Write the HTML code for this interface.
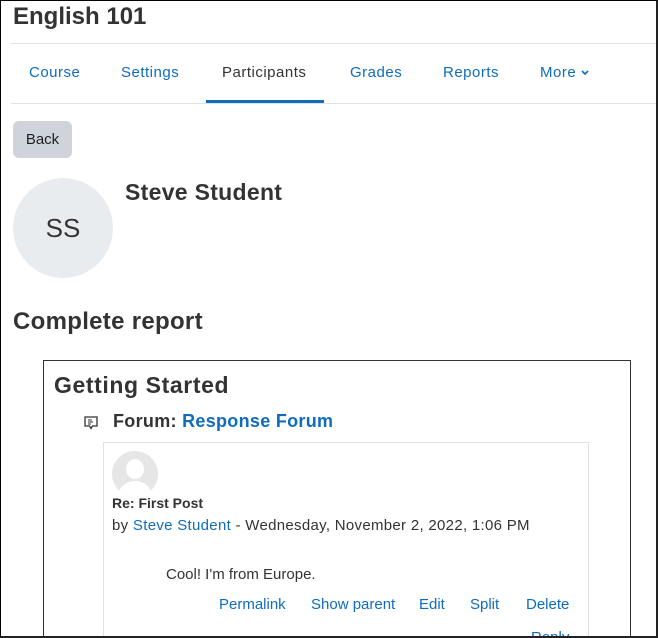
<!DOCTYPE html>
<html style="width:658px;height:638px;overflow:hidden"><head><style>
*{margin:0;padding:0;box-sizing:border-box}
body{width:658px;height:638px;overflow:hidden;font-family:"Liberation Sans",sans-serif;color:#1d2125;background:#fff;position:relative}
.frame{position:absolute;left:0;top:0;width:658px;height:638px;border:1px solid #000;border-right:2px solid #222;border-bottom:2px solid #222;z-index:10;pointer-events:none}
.a{position:absolute;white-space:nowrap}
.blue{color:#0f6cbf}
.n{font-size:15px;letter-spacing:0.5px}
</style></head><body>
<div class="frame"></div>
<div class="a" style="left:13px;top:3px;font-size:24px;font-weight:bold;color:#333">English 101</div>
<div class="a" style="left:11px;top:43px;width:647px;height:1px;background:#dee2e6"></div>
<div class="a blue n" style="left:29px;top:64px">Course</div>
<div class="a blue n" style="left:121px;top:64px">Settings</div>
<div class="a n" style="left:222px;top:64px;color:#333">Participants</div>
<div class="a blue n" style="left:350px;top:64px">Grades</div>
<div class="a blue n" style="left:443px;top:64px">Reports</div>
<div class="a blue n" style="left:540px;top:64px">More</div>
<svg class="a" style="left:581px;top:70px" width="8" height="6" viewBox="0 0 8 6"><path d="M1 1l3 3 3-3" fill="none" stroke="#0f6cbf" stroke-width="1.6"/></svg>
<div class="a" style="left:206px;top:100px;width:118px;height:3px;background:#0f6cbf"></div>
<div class="a" style="left:11px;top:103px;width:647px;height:1px;background:#dee2e6"></div>
<div class="a" style="left:13px;top:121px;width:59px;height:37px;background:#ced4da;border-radius:6px;font-size:15px;line-height:37px;text-align:center;color:#1d2125">Back</div>
<div class="a" style="left:13px;top:178px;width:100px;height:100px;border-radius:50%;background:#e9ecef;font-size:26px;line-height:100px;text-align:center;color:#333">SS</div>
<div class="a" style="left:125px;top:179px;font-size:23px;font-weight:bold;color:#333;letter-spacing:0.3px">Steve Student</div>
<div class="a" style="left:13px;top:308px;font-size:24px;font-weight:bold;color:#333;letter-spacing:0.3px">Complete report</div>
<div class="a" style="left:43px;top:360px;width:588px;height:300px;border:1px solid #333"></div>
<div class="a" style="left:54px;top:372px;font-size:23px;font-weight:bold;color:#333;letter-spacing:0.6px">Getting Started</div>
<svg class="a" style="left:83px;top:415px" width="16" height="16" viewBox="0 0 16 16"><path d="M2 2h12v9H9.5L8 13.5 6.5 11H2z" fill="none" stroke="#333" stroke-width="1.3"/><path d="M5 5h4M5 7h5M5 9h3" stroke="#333" stroke-width="1"/></svg>
<div class="a" style="left:113px;top:411px;font-size:18px;font-weight:bold;color:#333;letter-spacing:0.3px">Forum: <span class="blue">Response Forum</span></div>
<div class="a" style="left:103px;top:442px;width:486px;height:220px;border:1px solid #dee2e6"></div>
<div class="a" style="left:112px;top:451px;width:46px;height:46px;border-radius:50%;background:#e6e6e6;overflow:hidden"><div style="position:absolute;left:14px;top:8px;width:18px;height:20px;border-radius:50%;background:#fff"></div><div style="position:absolute;left:6px;top:30px;width:34px;height:30px;border-radius:50%;background:#fff"></div></div>
<div class="a" style="left:112px;top:495px;font-size:14px;font-weight:bold;color:#333">Re: First Post</div>
<div class="a" style="left:112px;top:517px;font-size:15px;color:#333;letter-spacing:0.3px">by <span class="blue">Steve Student</span> - Wednesday, November 2, 2022, 1:06 PM</div>
<div class="a" style="left:166px;top:566px;font-size:15px;color:#333">Cool! I'm from Europe.</div>
<div class="a blue" style="left:219px;top:596px;font-size:15px">Permalink</div>
<div class="a blue" style="left:311px;top:596px;font-size:15px">Show parent</div>
<div class="a blue" style="left:419px;top:596px;font-size:15px">Edit</div>
<div class="a blue" style="left:470px;top:596px;font-size:15px">Split</div>
<div class="a blue" style="left:526px;top:596px;font-size:15px">Delete</div>
<div class="a blue" style="left:531px;top:629px;font-size:15px">Reply</div>
</body></html>
